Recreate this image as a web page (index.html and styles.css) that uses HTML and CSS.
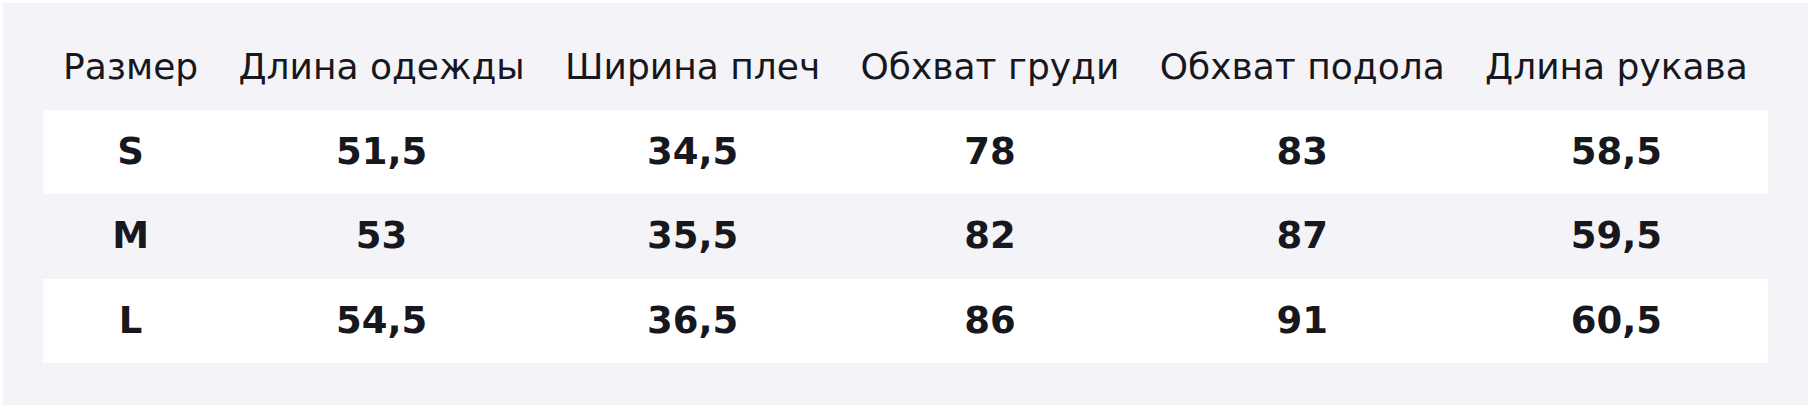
FILE: index.html
```html
<!DOCTYPE html>
<html lang="ru">
<head>
<meta charset="utf-8">
<title>Таблица размеров</title>
<link rel="stylesheet" href="styles.css">
</head>
<body>
<div class="page">
  <div class="panel">
    <table class="sizes">
      <thead>
        <tr>
          <th>Размер</th>
          <th>Длина одежды</th>
          <th>Ширина плеч</th>
          <th>Обхват груди</th>
          <th>Обхват подола</th>
          <th>Длина рукава</th>
        </tr>
      </thead>
      <tbody>
        <tr class="light">
          <td>S</td><td>51,5</td><td>34,5</td><td>78</td><td>83</td><td>58,5</td>
        </tr>
        <tr>
          <td>M</td><td>53</td><td>35,5</td><td>82</td><td>87</td><td>59,5</td>
        </tr>
        <tr class="light">
          <td>L</td><td>54,5</td><td>36,5</td><td>86</td><td>91</td><td>60,5</td>
        </tr>
      </tbody>
    </table>
  </div>
</div>
</body>
</html>
```
FILE: styles.css
```css
html, body {
  margin: 0;
  padding: 0;
  background: #ffffff;
}

.page {
  padding: 3px;
}

.panel {
  background: #f4f4f8;
  padding: 40px 40px 42px 40px;
  font-family: "DejaVu Sans", "Noto Sans", sans-serif;
  color: #17171e;
}

.sizes {
  width: 100%;
  border-collapse: collapse;
  border-spacing: 0;
}

.sizes th {
  font-weight: normal;
  font-size: 36px;
  line-height: 44.33px;
  padding: 1.9px 20px 20.8px 20px;
  text-align: center;
  white-space: nowrap;
}

.sizes td {
  font-weight: bold;
  font-size: 37px;
  line-height: 44.33px;
  padding: 20px 20px;
  text-align: center;
  white-space: nowrap;
}

.sizes tr.light td {
  background: #ffffff;
}
```
